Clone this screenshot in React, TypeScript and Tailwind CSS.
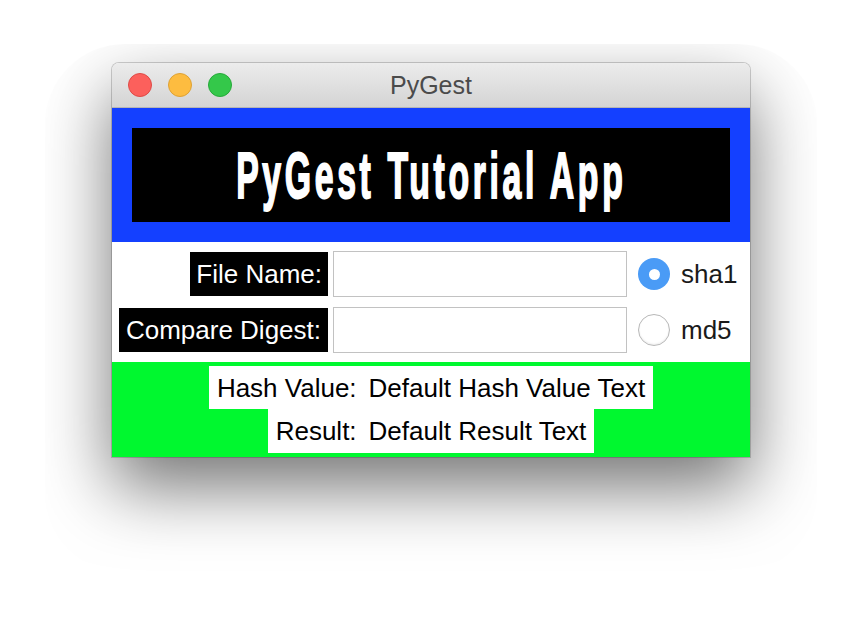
import React from 'react'

const sans = "font-['Liberation_Sans','Helvetica','Arial',sans-serif]"

function TrafficLights() {
  return (
    <div className="flex items-center gap-[16px] pl-[16px]">
      <span className="block w-[24px] h-[24px] rounded-full bg-[#fc605c] border border-[#de4b47]" />
      <span className="block w-[24px] h-[24px] rounded-full bg-[#fdbc40] border border-[#dea235]" />
      <span className="block w-[24px] h-[24px] rounded-full bg-[#34c84a] border border-[#27a93a]" />
    </div>
  )
}

function Radio({ checked, label }: { checked?: boolean; label: string }) {
  return (
    <div className="flex items-center gap-[11px] ml-[6px]">
      {checked ? (
        <span className="flex items-center justify-center w-[32px] h-[32px] rounded-full bg-[#4a9bf6]">
          <span className="block w-[11px] h-[11px] rounded-full bg-white" />
        </span>
      ) : (
        <span className="block w-[32px] h-[32px] rounded-full bg-white border border-[#b8b8b8] shadow-[inset_0_-1px_2px_rgba(0,0,0,0.08)]" />
      )}
      <span className="text-[26px] leading-none text-[#1a1a1a]">{label}</span>
    </div>
  )
}

export default function App() {
  return (
    <div className={`w-[862px] h-[618px] bg-white pl-[45px] pt-[44px] ${sans}`}>
      {/* shadow area, clipped like a window capture */}
      <div className="w-[772px] h-[529px] rounded-[80px] overflow-hidden pl-[67px] pt-[19px]">
        <div className="w-[638px] rounded-t-[7px] overflow-hidden shadow-[0_30px_70px_0_rgba(0,0,0,0.55),0_0_0_1px_rgba(0,0,0,0.18)]">
          {/* title bar */}
          <div className="grid grid-cols-[1fr_auto_1fr] items-center h-[45px] bg-linear-to-b from-[#ececec] to-[#d4d4d4] border-b border-[#b5b5b5]">
            <TrafficLights />
            <span className="text-[25px] leading-none text-[#4b4b4b]">PyGest</span>
            <span />
          </div>

          {/* header */}
          <div className="bg-[#1440ff] p-[20px]">
            <div className="flex items-center justify-center h-[94px] bg-black overflow-hidden">
              <span className="inline-block whitespace-nowrap text-[65px] leading-none font-bold tracking-[7px] text-white scale-x-[0.52] [-webkit-text-stroke:2px_white]">
                PyGest Tutorial App
              </span>
            </div>
          </div>

          {/* form */}
          <div className="bg-white pt-[9px] pb-[9px] pl-[4px]">
            <div className="grid grid-cols-[212px_294px_auto] items-center gap-x-[5px] gap-y-[10px]">
              <span className="justify-self-end flex items-center h-[44px] px-[6px] bg-black text-white text-[26px] leading-none">
                File Name:
              </span>
              <input className="h-[46px] w-[294px] border border-[#c2c2c2] bg-white outline-none px-2 text-[22px]" />
              <Radio checked label="sha1" />

              <span className="justify-self-end flex items-center h-[44px] px-[7px] bg-black text-white text-[26px] leading-none">
                Compare Digest:
              </span>
              <input className="h-[46px] w-[294px] border border-[#c2c2c2] bg-white outline-none px-2 text-[22px]" />
              <Radio label="md5" />
            </div>
          </div>

          {/* results */}
          <div className="flex flex-col items-center bg-[#00f82f] py-[4px] text-[26px] leading-none text-black">
            <div className="flex items-center gap-[12px] h-[43px] px-[8px] bg-white">
              <span>Hash Value:</span>
              <span>Default Hash Value Text</span>
            </div>
            <div className="flex items-center gap-[12px] h-[44px] px-[8px] bg-white">
              <span>Result:</span>
              <span>Default Result Text</span>
            </div>
          </div>
        </div>
      </div>
    </div>
  )
}
